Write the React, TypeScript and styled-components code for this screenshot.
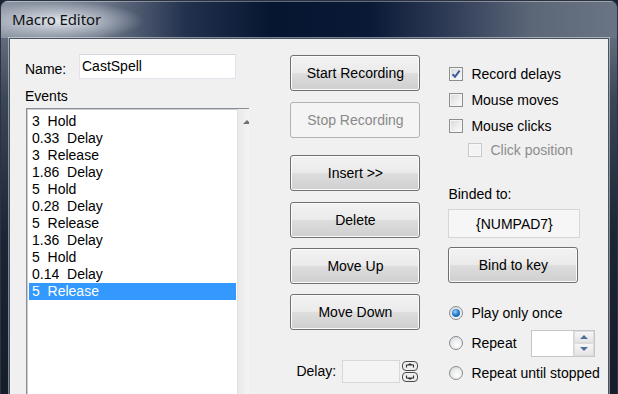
import styled, { createGlobalStyle } from "styled-components";

const Global = createGlobalStyle`
  html, body { margin: 0; padding: 0; background: #1a2232; }
  body { width: 618px; height: 394px; overflow: hidden; }
  * { box-sizing: border-box; }
`;

const events = [
    "3  Hold",
    "0.33  Delay",
    "3  Release",
    "1.86  Delay",
    "5  Hold",
    "0.28  Delay",
    "5  Release",
    "1.36  Delay",
    "5  Hold",
    "0.14  Delay",
    "5  Release",
];

const Window = styled.div`
  width: 618px;
  height: 394px;
  display: flex;
  flex-direction: column;
  overflow: hidden;
  border-radius: 8px 8px 0 0;
  border: 1px solid #2c3340;
  border-bottom: none;
  background: linear-gradient(180deg, #7a8393 0%, #3a4556 25%, #1c2535 60%, #151c2a 100%);
  font-family: "Liberation Sans", Arial, sans-serif;
  font-size: 14px;
  color: #000;
`;

const TitleBar = styled.div`
  height: 37px;
  flex: none;
  display: flex;
  align-items: center;
  padding-left: 11px;
  background:
    radial-gradient(ellipse 85px 20px at 58px 20px, rgba(230, 235, 242, 0.95), rgba(230, 235, 242, 0)),
    linear-gradient(90deg, #8c95a3 0%, #6e7889 16%, #22314d 30%, #061631 44%, #0a1a36 60%, #34405a 74%, #5b6677 86%, #6a7485 100%);
  box-shadow: inset 0 1px 0 rgba(255, 255, 255, 0.35);
`;

const Title = styled.span`
  font-family: "Noto Sans", "Open Sans", sans-serif;
  font-size: 15px;
  color: #111;
  letter-spacing: -0.1px;
  padding-bottom: 2px;
`;

const Body = styled.div`
  flex: 1;
  display: flex;
  padding: 0 8px 0 8px;
  min-height: 0;
`;

const Client = styled.div`
  flex: 1;
  display: flex;
  align-items: flex-start;
  background: #f0f0f0;
  border: 1px solid #4a5364;
  border-bottom: none;
  box-shadow: 0 0 0 1px rgba(255, 255, 255, 0.45);
  overflow: hidden;
`;

const LeftCol = styled.div`
  width: 225px;
  margin-left: 15px;
  display: flex;
  flex-direction: column;
`;

const NameRow = styled.div`
  margin-top: 15px;
  height: 25px;
  display: flex;
  align-items: center;
`;

const Label = styled.span<{ $w?: number; $dim?: boolean }>`
  ${(p) => (p.$w ? `width: ${p.$w}px;` : "")}
  color: ${(p) => (p.$dim ? "#8d8d8d" : "#000")};
  white-space: nowrap;
  line-height: 17px;
`;

const NameLabel = styled(Label)`
  padding-top: 6px;
`;

const TextBox = styled.div`
  width: 157px;
  height: 25px;
  background: #fff;
  border: 1px solid #e2e3ea;
  border-top-color: #d5d7de;
  padding: 3px 2px;
  line-height: 17px;
`;

const EventsLabel = styled(Label)`
  margin-top: 9px;
`;

const ListBox = styled.div`
  margin-top: 3px;
  margin-left: 1px;
  height: 320px;
  display: flex;
  background: #fff;
  border: 1px solid #8a8f96;
  border-right: none;
  box-shadow: inset 1px 1px 0 #c9ccd1;
  overflow: hidden;
`;

const ListItems = styled.div`
  flex: 1;
  padding: 4px 1px 0 2px;
`;

const ListRow = styled.div<{ $selected?: boolean }>`
  height: 17px;
  line-height: 17px;
  padding-left: 3px;
  white-space: pre;
  background: ${(p) => (p.$selected ? "#3399ff" : "transparent")};
  color: ${(p) => (p.$selected ? "#fff" : "#000")};
`;

const ScrollBar = styled.div`
  width: 12px;
  background: linear-gradient(90deg, #e9e9e9, #f4f4f4);
  border-left: 1px solid #e2e2e2;
  position: relative;
`;

const ScrollArrow = styled.span`
  position: absolute;
  right: -2px;
  top: 11px;
  width: 0;
  height: 0;
  border-left: 4px solid transparent;
  border-right: 4px solid transparent;
  border-bottom: 4px solid #707070;
`;

const MidCol = styled.div`
  width: 130px;
  margin-left: 41px;
  display: flex;
  flex-direction: column;
`;

const Button = styled.button<{ $mt: number; $w?: number }>`
  margin-top: ${(p) => p.$mt}px;
  width: ${(p) => p.$w ?? 130}px;
  height: 36px;
  padding: 0;
  font-family: "Liberation Sans", Arial, sans-serif;
  font-size: 14px;
  color: #000;
  border: 1px solid #707070;
  border-radius: 3px;
  background: linear-gradient(180deg, #f2f2f2 0%, #ebebeb 48%, #dddddd 52%, #cfcfcf 100%);
  box-shadow: inset 0 0 0 1px #fbfbfb;
  &:disabled {
    color: #8a8a8a;
    border-color: #adb2b5;
    background: #f4f4f4;
    box-shadow: none;
  }
`;

const DelayRow = styled.div`
  margin-top: 30px;
  display: flex;
  align-items: center;
  padding-left: 6px;
`;

const DelayBox = styled.div`
  width: 58px;
  height: 23px;
  background: #f4f4f4;
  border: 1px solid #d8d8d8;
`;

const OldSpin = styled.div`
  margin-left: 2px;
  display: flex;
  flex-direction: column;
  gap: 1px;
`;

const RightCol = styled.div`
  margin-left: 28px;
  width: 160px;
  display: flex;
  flex-direction: column;
`;

const CheckRow = styled.div<{ $mt?: number; $h?: number; $indent?: number }>`
  margin-top: ${(p) => p.$mt ?? 0}px;
  height: ${(p) => p.$h ?? 26}px;
  padding-left: ${(p) => 1 + (p.$indent ?? 0)}px;
  display: flex;
  align-items: center;
  gap: 8px;
`;

const Box = styled.span<{ $disabled?: boolean }>`
  width: 14px;
  height: 14px;
  flex: none;
  display: flex;
  align-items: center;
  justify-content: center;
  border: 1px solid ${(p) => (p.$disabled ? "#c8c8c8" : "#8e8f8f")};
  background: ${(p) =>
        p.$disabled ? "#f4f4f4" : "linear-gradient(135deg, #d6d7d9 0%, #eeeeef 55%, #fbfbfb 100%)"};
  box-shadow: inset 0 0 0 1px ${(p) => (p.$disabled ? "#f7f7f7" : "#f4f4f4")};
`;

const Radio = styled.span<{ $on?: boolean }>`
  width: 14px;
  height: 14px;
  flex: none;
  border-radius: 50%;
  border: 1px solid #8a8c8f;
  background: radial-gradient(circle at 60% 65%, #ffffff 0%, #e9eaeb 55%, #c9cbce 100%);
  display: flex;
  align-items: center;
  justify-content: center;
  &::after {
    content: "";
    display: ${(p) => (p.$on ? "block" : "none")};
    width: 8px;
    height: 8px;
    border-radius: 50%;
    background: radial-gradient(circle at 40% 35%, #9fd4fb 0%, #2a7fd0 45%, #0b4f95 100%);
  }
`;

const BindLabel = styled(Label)`
  margin-top: 25px;
`;

const BindBox = styled.div`
  margin-top: 6px;
  width: 132px;
  height: 29px;
  display: flex;
  align-items: center;
  justify-content: center;
  background: #f6f6f6;
  border: 1px solid #d6d6d6;
`;

const RadioRow = styled(CheckRow)``;

const UpDown = styled.div`
  margin-left: 6px;
  width: 64px;
  height: 27px;
  display: flex;
  background: #fff;
  border: 1px solid #c4c6cb;
`;

const UpDownField = styled.div`
  flex: 1;
`;

const UpDownBtns = styled.div`
  width: 21px;
  display: flex;
  flex-direction: column;
  border-left: 1px solid #d4d6da;
`;

const UpDownBtn = styled.div`
  flex: 1;
  display: flex;
  align-items: center;
  justify-content: center;
  background: linear-gradient(180deg, #f6f6f6, #e4e4e4);
  border: 1px solid #dcdcdc;
`;

const Tri = styled.span<{ $down?: boolean }>`
  width: 0;
  height: 0;
  border-left: 4px solid transparent;
  border-right: 4px solid transparent;
  ${(p) => (p.$down ? "border-top" : "border-bottom")}: 4px solid #4d6f9a;
`;

function Check({ checked, disabled }: { checked?: boolean; disabled?: boolean }) {
    return (
        <Box $disabled={disabled}>
            {checked && (
                <svg width="10" height="10" viewBox="0 0 10 10">
                    <path d="M1.5 5.2 L4 7.8 L8.6 1.6" fill="none" stroke="#3d5a96" strokeWidth="2" />
                </svg>
            )}
        </Box>
    );
}

function SpinKnob({ down }: { down?: boolean }) {
    return (
        <svg width="16" height="10" viewBox="0 0 16 10">
            <rect x="0.5" y="0.5" width="15" height="9" rx="3.5" fill="#eeeeee" stroke="#4a4a4a" />
            {down ? (
                <path d="M4.5 3.5 L4.5 6 L11.5 6 L11.5 3.5 M6 6 L8 7.2 L10 6" fill="none" stroke="#2d2d2d" strokeWidth="1.1" />
            ) : (
                <path d="M4.5 6.5 L4.5 4 L11.5 4 L11.5 6.5 M6 4 L8 2.8 L10 4" fill="none" stroke="#2d2d2d" strokeWidth="1.1" />
            )}
        </svg>
    );
}

export default function App() {
    return (
        <>
            <Global />
            <Window>
                <TitleBar>
                    <Title>Macro Editor</Title>
                </TitleBar>
                <Body>
                    <Client>
                        <LeftCol>
                            <NameRow>
                                <NameLabel $w={54}>Name:</NameLabel>
                                <TextBox>CastSpell</TextBox>
                            </NameRow>
                            <EventsLabel>Events</EventsLabel>
                            <ListBox>
                                <ListItems>
                                    {events.map((e, i) => (
                                        <ListRow key={i} $selected={i === events.length - 1}>
                                            {e}
                                        </ListRow>
                                    ))}
                                </ListItems>
                                <ScrollBar>
                                    <ScrollArrow />
                                </ScrollBar>
                            </ListBox>
                        </LeftCol>

                        <MidCol>
                            <Button $mt={16}>Start Recording</Button>
                            <Button $mt={11} disabled>Stop Recording</Button>
                            <Button $mt={17}>Insert &gt;&gt;</Button>
                            <Button $mt={11}>Delete</Button>
                            <Button $mt={10}>Move Up</Button>
                            <Button $mt={10}>Move Down</Button>
                            <DelayRow>
                                <Label $w={46}>Delay:</Label>
                                <DelayBox />
                                <OldSpin>
                                    <SpinKnob />
                                    <SpinKnob down />
                                </OldSpin>
                            </DelayRow>
                        </MidCol>

                        <RightCol>
                            <CheckRow $mt={22}>
                                <Check checked />
                                <Label>Record delays</Label>
                            </CheckRow>
                            <CheckRow>
                                <Check />
                                <Label>Mouse moves</Label>
                            </CheckRow>
                            <CheckRow>
                                <Check />
                                <Label>Mouse clicks</Label>
                            </CheckRow>
                            <CheckRow $h={22} $indent={19}>
                                <Check disabled />
                                <Label $dim>Click position</Label>
                            </CheckRow>
                            <BindLabel>Binded to:</BindLabel>
                            <BindBox>{"{NUMPAD7}"}</BindBox>
                            <Button $mt={9} $w={130}>Bind to key</Button>
                            <RadioRow $mt={15} $h={30}>
                                <Radio $on />
                                <Label>Play only once</Label>
                            </RadioRow>
                            <RadioRow $h={30}>
                                <Radio />
                                <Label>Repeat</Label>
                                <UpDown>
                                    <UpDownField />
                                    <UpDownBtns>
                                        <UpDownBtn><Tri /></UpDownBtn>
                                        <UpDownBtn><Tri $down /></UpDownBtn>
                                    </UpDownBtns>
                                </UpDown>
                            </RadioRow>
                            <RadioRow $h={30}>
                                <Radio />
                                <Label>Repeat until stopped</Label>
                            </RadioRow>
                        </RightCol>
                    </Client>
                </Body>
            </Window>
        </>
    );
}
